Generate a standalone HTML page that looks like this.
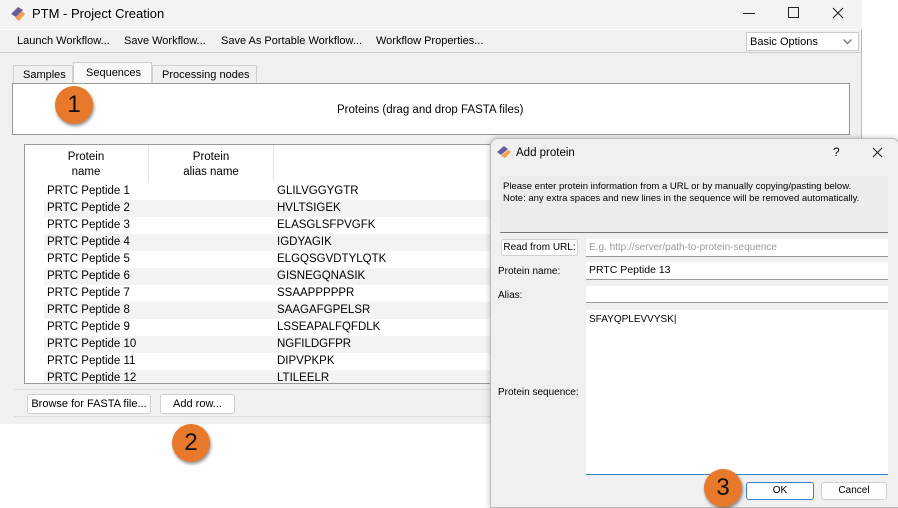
<!DOCTYPE html><html><head><style>
*{box-sizing:border-box;margin:0;padding:0}
body{width:898px;height:506px;position:relative;background:#fff;font-family:"Liberation Sans",sans-serif;font-size:12px;color:#000;overflow:hidden}
.a{position:absolute}
.btn{position:absolute;background:#fdfdfd;border:1px solid #d0d0d0;border-radius:3px;font-size:11px;text-align:center}
.circ{position:absolute;width:38px;height:38px;border-radius:50%;background:#e8792b;box-shadow:1px 2px 3px rgba(0,0,0,.45);font-size:24px;text-align:center;line-height:38px;color:#111}
.row{position:absolute;left:44px;width:446px;height:17px;font-size:11.5px;line-height:17px}
.row span{position:absolute}
.inp{position:absolute;left:586px;width:302px;background:#fff;border-bottom:1px solid #999;font-size:11px;padding-left:3px}
.tb{position:absolute;top:35px;font-size:11px}
</style></head><body>
<div class="a" style="left:0;top:0;width:862px;height:424px;background:#f0f0f0;border-right:1px solid #bbb;border-radius:0 8px 0 0"></div>
<div class="a" style="left:0;top:0;width:862px;height:29px;background:#f3f3f3"></div>
<svg class="a" style="left:9px;top:6px" width="18" height="16"><polygon points="2,8 9,1 14,4 7,11" fill="#6c5aa0"/><polygon points="6,12 13,5 16,8 10,15" fill="#f0a050"/></svg>
<div class="a" style="left:32px;top:6px;font-size:13px">PTM - Project Creation</div>
<div class="a" style="left:743px;top:13px;width:12px;height:1px;background:#222"></div>
<div class="a" style="left:788px;top:7px;width:11px;height:11px;border:1px solid #222"></div>
<svg class="a" style="left:832px;top:7px" width="12" height="12"><path d="M1 1L11 11M11 1L1 11" stroke="#222" stroke-width="1.1"/></svg>
<div class="a" style="left:0;top:29px;width:862px;height:1px;background:#fff"></div>
<div class="tb" style="left:17px">Launch Workflow...</div>
<div class="tb" style="left:124px">Save Workflow...</div>
<div class="tb" style="left:221px">Save As Portable Workflow...</div>
<div class="tb" style="left:376px">Workflow Properties...</div>
<div class="a" style="left:746px;top:32px;width:113px;height:19px;background:#fff;border:1px solid #ccc;font-size:11px;padding:3px 0 0 3px">Basic Options<svg style="position:absolute;right:6px;top:6px" width="9" height="6"><path d="M0.5 0.5L4.5 4.5L8.5 0.5" stroke="#555" fill="none"/></svg></div>
<div class="a" style="left:0;top:52px;width:862px;height:1px;background:#ccc"></div>
<div class="a" style="left:13px;top:65px;width:60px;height:18px;border:1px solid #d0d0d0;border-bottom:none;font-size:11px;padding:3px 0 0 9px">Samples</div>
<div class="a" style="left:73px;top:62px;width:79px;height:22px;background:#f9f9f9;border:1px solid #d0d0d0;border-bottom:none;font-size:11px;padding:4px 0 0 12px">Sequences</div>
<div class="a" style="left:152px;top:65px;width:105px;height:18px;border:1px solid #d0d0d0;border-bottom:none;font-size:11px;padding:3px 0 0 9px">Processing nodes</div>
<div class="a" style="left:12px;top:83px;width:838px;height:52px;background:#fff;border:1px solid #999"></div>
<div class="a" style="left:337px;top:104px;font-size:11.5px">Proteins (drag and drop FASTA files)</div>
<div class="a" style="left:24px;top:144px;width:470px;height:240px;background:#fff;border:1px solid #999"></div>
<div class="a" style="left:148px;top:145px;width:1px;height:36px;background:#e3e3e3"></div>
<div class="a" style="left:273px;top:145px;width:1px;height:36px;background:#e3e3e3"></div>
<div class="a" style="left:60px;top:150px;width:52px;text-align:center;font-size:11.5px;line-height:15px">Protein<br>name</div>
<div class="a" style="left:176px;top:150px;width:70px;text-align:center;font-size:11.5px;line-height:15px">Protein<br>alias name</div>
<div class="row" style="top:183px"><span style="left:3px">PRTC Peptide 1</span><span style="left:233px">GLILVGGYGTR</span></div>
<div class="row" style="top:200px;background:#f3f3f3"><span style="left:3px">PRTC Peptide 2</span><span style="left:233px">HVLTSIGEK</span></div>
<div class="row" style="top:217px"><span style="left:3px">PRTC Peptide 3</span><span style="left:233px">ELASGLSFPVGFK</span></div>
<div class="row" style="top:234px;background:#f3f3f3"><span style="left:3px">PRTC Peptide 4</span><span style="left:233px">IGDYAGIK</span></div>
<div class="row" style="top:251px"><span style="left:3px">PRTC Peptide 5</span><span style="left:233px">ELGQSGVDTYLQTK</span></div>
<div class="row" style="top:268px;background:#f3f3f3"><span style="left:3px">PRTC Peptide 6</span><span style="left:233px">GISNEGQNASIK</span></div>
<div class="row" style="top:285px"><span style="left:3px">PRTC Peptide 7</span><span style="left:233px">SSAAPPPPPR</span></div>
<div class="row" style="top:302px;background:#f3f3f3"><span style="left:3px">PRTC Peptide 8</span><span style="left:233px">SAAGAFGPELSR</span></div>
<div class="row" style="top:319px"><span style="left:3px">PRTC Peptide 9</span><span style="left:233px">LSSEAPALFQFDLK</span></div>
<div class="row" style="top:336px;background:#f3f3f3"><span style="left:3px">PRTC Peptide 10</span><span style="left:233px">NGFILDGFPR</span></div>
<div class="row" style="top:353px"><span style="left:3px">PRTC Peptide 11</span><span style="left:233px">DIPVPKPK</span></div>
<div class="row" style="top:370px;height:13px;overflow:hidden;background:#f3f3f3"><span style="left:3px">PRTC Peptide 12</span><span style="left:233px">LTILEELR</span></div>
<div class="a" style="left:14px;top:389px;width:490px;height:28px;border-top:1px solid #ddd;border-bottom:1px solid #ddd"></div>
<div class="btn" style="left:27px;top:394px;width:124px;height:20px;line-height:18px">Browse for FASTA file...</div>
<div class="btn" style="left:160px;top:394px;width:75px;height:20px;line-height:18px">Add row...</div>
<div class="a" style="left:490px;top:138px;width:410px;height:370px;background:#f0f0f0;border:1px solid #bbb;border-radius:8px 8px 0 0;box-shadow:0 0 6px rgba(0,0,0,.25)"></div>
<svg class="a" style="left:496px;top:145px" width="16" height="14"><polygon points="1,7 8,1 12,4 5,10" fill="#6c5aa0"/><polygon points="5,11 12,5 15,7 9,13" fill="#f0a050"/></svg>
<div class="a" style="left:516px;top:147px;font-size:11.5px">Add protein</div>
<div class="a" style="left:833px;top:145px;font-size:12px">?</div>
<svg class="a" style="left:872px;top:147px" width="11" height="11"><path d="M1 1L10 10M10 1L1 10" stroke="#222" stroke-width="1.1"/></svg>
<div class="a" style="left:500px;top:176px;width:388px;height:57px;border-bottom:1px solid #777;background:#ececec;font-size:9.5px;line-height:12px;padding:5px 0 0 3px">Please enter protein information from a URL or by manually copying/pasting below.<br>Note: any extra spaces and new lines in the sequence will be removed automatically.</div>
<div class="btn" style="left:501px;top:239px;width:77px;height:17px;line-height:15px;font-size:10px">Read from URL:</div>
<div class="inp" style="top:239px;height:18px;line-height:17px;color:#999;font-size:10px">E.g. http://server/path-to-protein-sequence</div>
<div class="a" style="left:498px;top:266px;font-size:10px">Protein name:</div>
<div class="inp" style="top:262px;height:18px;line-height:17px;font-size:10.5px">PRTC Peptide 13</div>
<div class="a" style="left:498px;top:290px;font-size:10px">Alias:</div>
<div class="inp" style="top:286px;height:17px"></div>
<div class="a" style="left:498px;top:387px;font-size:10px">Protein sequence:</div>
<div class="inp" style="top:310px;height:165px;border-bottom:1px solid #3a7fd0;padding-top:4px;font-size:10px">SFAYQPLEVVYSK|</div>
<div class="btn" style="left:746px;top:482px;width:68px;height:18px;line-height:16px;border-color:#3a7fd0;font-size:10px">OK</div>
<div class="btn" style="left:821px;top:482px;width:66px;height:18px;line-height:16px;font-size:10px">Cancel</div>
<div class="circ" style="left:55px;top:86px">1</div>
<div class="circ" style="left:172px;top:424px">2</div>
<div class="circ" style="left:704px;top:469px">3</div>
</body></html>
